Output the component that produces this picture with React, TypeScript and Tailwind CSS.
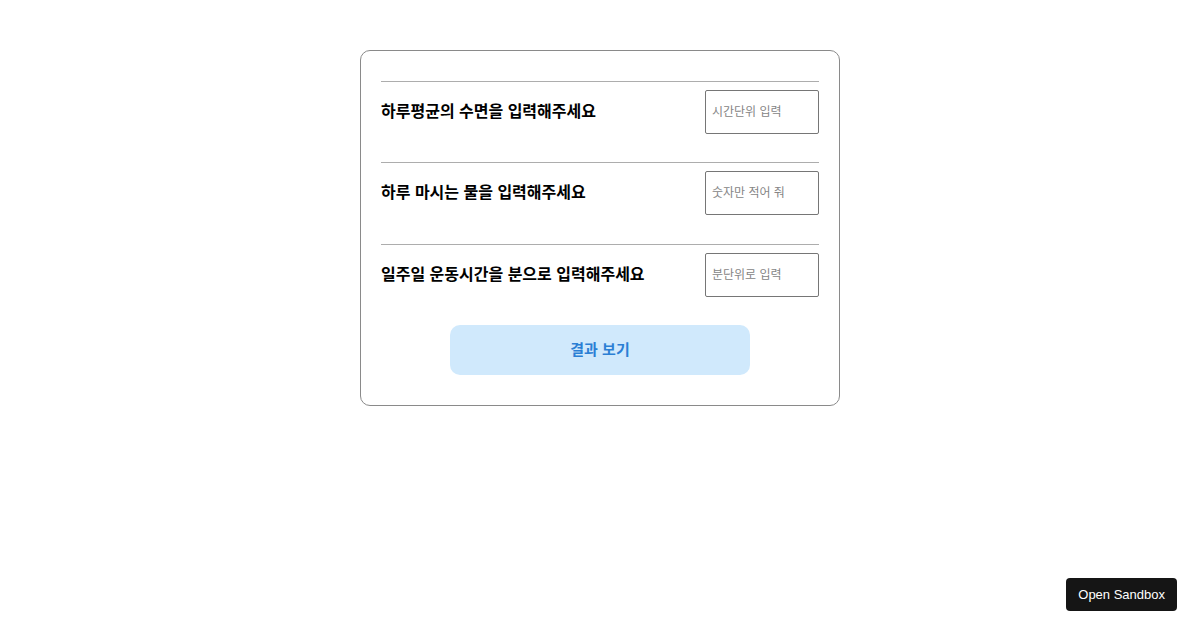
const questions = [
  { label: "하루평균의 수면을 입력해주세요", placeholder: "시간단위 입력" },
  { label: "하루 마시는 물을 입력해주세요", placeholder: "숫자만 적어 줘" },
  { label: "일주일 운동시간을 분으로 입력해주세요", placeholder: "분단위로 입력" },
];

export default function App() {
  return (
    <div className="min-h-[630px] bg-white font-['Liberation_Sans','Noto_Sans_CJK_KR',sans-serif] text-black">
      <div className="mx-auto w-[480px] pt-[50px]">
        <div className="rounded-[10px] border border-[#8a8a8a] p-5">
          {questions.map((q) => (
            <div key={q.label} className="mt-[10px] border-t border-[#adadad] pb-[18.3px] pt-2">
              <div className="flex items-center justify-between gap-2">
                <span className="text-[16px] font-bold leading-tight">{q.label}</span>
                <input
                  type="number"
                  placeholder={q.placeholder}
                  className="h-[44px] w-[114px] shrink-0 rounded-[2px] border border-[#767676] px-[6px] text-[12px] outline-none placeholder:text-[#858585]"
                />
              </div>
            </div>
          ))}
          <button className="mx-auto my-[10px] block h-[50px] w-[300px] rounded-[10px] bg-[#d0e9fc] text-[15px] font-bold text-[#2b7fd4]">
            결과 보기
          </button>
        </div>
      </div>
      <button className="fixed bottom-[19px] right-[23px] h-[33px] rounded-[4px] bg-[#151515] px-[12px] text-[13px] text-white">
        Open Sandbox
      </button>
    </div>
  );
}
